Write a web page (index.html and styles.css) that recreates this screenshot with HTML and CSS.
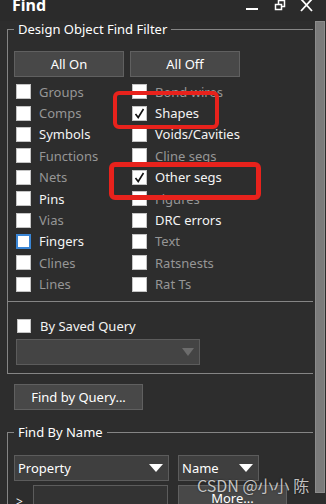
FILE: index.html
```html
<!DOCTYPE html>
<html>

<head>
    <title>Find</title>
    <link rel="stylesheet" href="styles.css">
</head>

<body>
    <div class="window">
        <div class="titlebar">
            <span class="title">Find</span>
            <div class="controls">
                <svg class="ctl-min" width="12" height="12" viewBox="0 0 12 12">
                    <line x1="0" y1="9" x2="12" y2="9" stroke="#fff" stroke-width="2" />
                </svg>
                <svg class="ctl-restore" width="12" height="12" viewBox="0 0 12 12">
                    <rect x="1.5" y="4.5" width="6" height="5" fill="none" stroke="#fff" stroke-width="1.5" />
                    <path d="M4.5 4 V0.5 H10.5 V6.5 H8" fill="none" stroke="#fff" stroke-width="1.5" />
                </svg>
                <svg class="ctl-close" width="13" height="12" viewBox="0 0 13 12">
                    <path d="M1 -1 L12 11 M12 -1 L1 11" stroke="#fff" stroke-width="1.8" />
                </svg>
            </div>
        </div>

        <div class="pane">
            <div class="main">
                <fieldset class="group filter">
                    <legend>Design Object Find Filter</legend>
                    <div class="btn-row">
                        <button class="btn half">All On</button>
                        <button class="btn half">All Off</button>
                    </div>
                    <div class="check-grid">
                        <label class="check off"><span class="box"></span>Groups</label>
                        <label class="check off"><span class="box"></span>Comps</label>
                        <label class="check"><span class="box"></span>Symbols</label>
                        <label class="check off"><span class="box"></span>Functions</label>
                        <label class="check off"><span class="box"></span>Nets</label>
                        <label class="check"><span class="box"></span>Pins</label>
                        <label class="check off"><span class="box"></span>Vias</label>
                        <label class="check"><span class="box focus"></span>Fingers</label>
                        <label class="check off"><span class="box"></span>Clines</label>
                        <label class="check off"><span class="box"></span>Lines</label>

                        <label class="check off"><span class="box"></span>Bond wires</label>
                        <label class="check"><span class="box"><svg width="13" height="13" viewBox="0 0 13 13"><path d="M2.5 7 L5.2 10.5 L10.5 2" fill="none" stroke="#111" stroke-width="1.6" /></svg></span>Shapes</label>
                        <label class="check"><span class="box"></span>Voids/Cavities</label>
                        <label class="check off"><span class="box"></span>Cline segs</label>
                        <label class="check"><span class="box"><svg width="13" height="13" viewBox="0 0 13 13"><path d="M2.5 7 L5.2 10.5 L10.5 2" fill="none" stroke="#111" stroke-width="1.6" /></svg></span>Other segs</label>
                        <label class="check off"><span class="box"></span>Figures</label>
                        <label class="check"><span class="box"></span>DRC errors</label>
                        <label class="check off"><span class="box"></span>Text</label>
                        <label class="check off"><span class="box"></span>Ratsnests</label>
                        <label class="check off"><span class="box"></span>Rat Ts</label>
                    </div>
                    <div class="separator"></div>
                    <div class="saved">
                        <label class="check saved-check"><span class="box small"></span>By Saved Query</label>
                        <div class="select disabled saved-select"><span class="arrow"></span></div>
                    </div>
                </fieldset>

                <button class="btn query">Find by Query...</button>

                <fieldset class="group byname">
                    <legend>Find By Name</legend>
                    <div class="select-row">
                        <div class="select prop">Property<span class="arrow"></span></div>
                        <div class="select kind">Name<span class="arrow"></span></div>
                    </div>
                    <div class="input-row">
                        <span class="prompt">&gt;</span>
                        <div class="text-input"></div>
                        <button class="btn more">More...</button>
                    </div>
                </fieldset>
            </div>
            <div class="scrollbar"></div>
        </div>

        <!-- annotation marks drawn over the screenshot -->
        <div class="mark mark-shapes"></div>
        <div class="mark mark-segs"></div>
        <div class="watermark">CSDN @小小 陈</div>
    </div>
</body>

</html>
```

FILE: styles.css
```css
body {
    margin: 0;
    background-color: #2d2d2d;
    font-family: "Noto Sans", "Open Sans", sans-serif;
    font-size: 13px;
    color: #f4f4f4;
}

.window {
    position: relative;
    width: 326px;
    height: 504px;
    overflow: hidden;
}

.titlebar {
    height: 21px;
    display: flex;
    justify-content: space-between;
    align-items: flex-start;
    background-color: #2b2b2b;
}

.title {
    font-size: 16px;
    font-weight: bold;
    line-height: 16px;
    margin: -3px 0 0 12px;
    color: #fff;
}

.controls {
    display: flex;
    margin-right: 13px;
}

.controls svg {
    display: block;
}

.ctl-restore {
    margin-left: 16px;
}

.ctl-close {
    margin-left: 14px;
}

.pane {
    display: flex;
    height: 483px;
}

.main {
    flex: 1;
    min-width: 0;
}

.scrollbar {
    width: 8px;
    height: 470px;
    margin-right: 1px;
    background-color: #7b7b7b;
    border: 1px solid #8c8c8c;
}

.group {
    margin: 0 2px 0 7px;
    padding: 13px 0 8px 6px;
    border: 1px solid #858585;
    border-right: none;
    min-width: 0;
}

.group legend {
    padding: 0 4px;
    font-size: 13px;
    line-height: 17px;
    color: #fff;
}

.btn {
    box-sizing: border-box;
    height: 26px;
    padding: 0;
    background-color: #484848;
    border: 1px solid #606060;
    color: #fff;
    font-family: "Noto Sans", "Open Sans", sans-serif;
    font-size: 13px;
}

.btn-row {
    display: flex;
    gap: 6px;
}

.btn.half {
    width: 110px;
}

.check-grid {
    display: grid;
    grid-template-columns: 116px 116px;
    grid-template-rows: repeat(10, 21.4px);
    grid-auto-flow: column;
    margin-top: 4px;
}

.check {
    display: flex;
    align-items: center;
    gap: 8px;
    padding-left: 2px;
    white-space: nowrap;
}

.check.off {
    color: #969696;
}

.box {
    box-sizing: border-box;
    width: 15px;
    height: 15px;
    background-color: #fff;
    border: 1px solid #c4c4c4;
    display: flex;
    align-items: center;
    justify-content: center;
}

.box svg {
    display: block;
}

.box.focus {
    border: 2px solid #3a86d6;
}

.box.small {
    width: 14px;
    height: 14px;
}

.separator {
    height: 0;
    border-top: 1px solid #858585;
    margin: 6px 0 0 -6px;
}

.saved {
    padding-top: 15px;
}

.saved-check {
    height: 18px;
    padding-left: 3px;
    gap: 9px;
}

.select {
    box-sizing: border-box;
    height: 26px;
    display: flex;
    align-items: center;
    justify-content: space-between;
    padding: 0 5px 0 3px;
    background-color: #3f3f3f;
    border: 1px solid #5c5c5c;
    color: #fff;
}

.select .arrow {
    width: 0;
    height: 0;
    border-left: 7px solid transparent;
    border-right: 7px solid transparent;
    border-top: 8px solid #fff;
}

.select.disabled {
    background-color: #444;
    justify-content: flex-end;
}

.select.disabled .arrow {
    border-left-width: 6px;
    border-right-width: 6px;
    border-top-color: #6c6c6c;
}

.saved-select {
    width: 184px;
    margin: 4px 0 0 2px;
}

.btn.query {
    display: block;
    width: 129px;
    margin: 10px 0 0 14px;
}

.group.byname {
    margin-top: 14px;
    padding-top: 14px;
}

.select-row {
    display: flex;
    gap: 9px;
}

.select.prop {
    width: 155px;
}

.select.kind {
    width: 81px;
}

.input-row {
    display: flex;
    align-items: flex-start;
    margin-top: 4px;
}

.prompt {
    width: 19px;
    padding: 8px 0 0 2px;
    box-sizing: border-box;
    font-size: 12px;
}

.text-input {
    box-sizing: border-box;
    width: 135px;
    height: 26px;
    background-color: #333;
    border: 1px solid #5c5c5c;
}

.btn.more {
    width: 109px;
    margin-left: 10px;
}

.mark {
    position: absolute;
    box-sizing: border-box;
    border: 4px solid #e8221c;
    border-radius: 6px;
}

.mark-shapes {
    left: 113px;
    top: 91px;
    width: 106px;
    height: 38px;
}

.mark-segs {
    left: 109px;
    top: 162px;
    width: 152px;
    height: 38px;
    border-width: 5px;
}

.watermark {
    position: absolute;
    left: 197px;
    top: 475px;
    font-family: "Noto Sans CJK SC", "Noto Sans", sans-serif;
    font-size: 16px;
    line-height: 20px;
    color: rgba(225, 225, 225, 0.85);
    text-shadow: 0 0 2px rgba(0, 0, 0, 0.6);
}
```
